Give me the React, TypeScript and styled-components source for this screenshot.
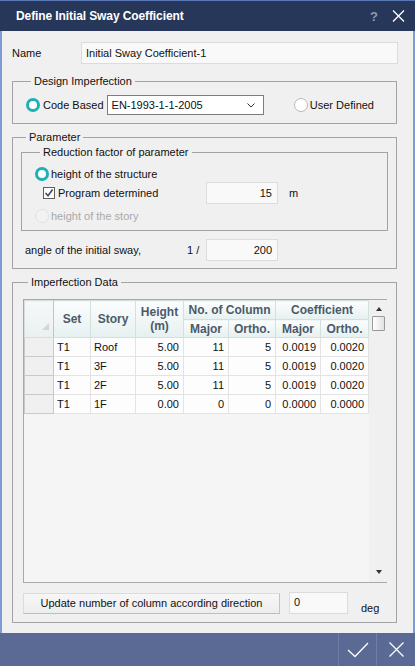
import React from 'react';
import styled, { createGlobalStyle } from 'styled-components';

const Global = createGlobalStyle`
  html, body { margin: 0; padding: 0; }
  body {
    font-family: "Liberation Sans", Arial, sans-serif;
    font-size: 11px;
    color: #111;
    background: #ffffff;
  }
  * { box-sizing: border-box; }
`;

const Window = styled.div`
  width: 415px;
  height: 666px;
  display: flex;
  flex-direction: column;
  overflow: hidden;
`;

const TitleBar = styled.div`
  height: 31px;
  flex: none;
  background: #27375a;
  border-top: 1px solid #5a78b8;
  display: flex;
  align-items: center;
  padding: 0 10px 0 16px;
  color: #fff;
`;

const Title = styled.div`
  font-weight: bold;
  font-size: 12px;
  letter-spacing: -0.1px;
  flex: 1;
`;

const TitleHelp = styled.span`
  color: #8c98b0;
  font-size: 13px;
  font-weight: bold;
  margin-right: 14px;
`;

const Body = styled.div`
  flex: 1;
  background: #f0f0f0;
  border-left: 2px solid #7f9bd6;
  border-right: 2px solid #7f9bd6;
  padding: 11px 16px 0 10px;
  display: flex;
  flex-direction: column;
`;

const Row = styled.div<{ $mt?: number; $h?: number }>`
  display: flex;
  align-items: center;
  margin-top: ${p => p.$mt ?? 0}px;
  height: ${p => p.$h ?? 14}px;
`;

const Label = styled.span<{ $w?: number; $ml?: number; $disabled?: boolean }>`
  ${p => (p.$w ? `width: ${p.$w}px; flex: none;` : '')}
  margin-left: ${p => p.$ml ?? 0}px;
  color: ${p => (p.$disabled ? '#a9a9a9' : '#111')};
  white-space: nowrap;
`;

const TextBox = styled.div<{ $w: number; $align?: string; $top?: boolean; $ml?: number }>`
  width: ${p => p.$w}px;
  height: 22px;
  flex: none;
  margin-left: ${p => p.$ml ?? 0}px;
  background: #f9f9f9;
  border: 1px solid #dcdcdc;
  display: flex;
  align-items: ${p => (p.$top ? 'flex-start' : 'center')};
  justify-content: ${p => (p.$align === 'right' ? 'flex-end' : 'flex-start')};
  padding: ${p => (p.$top ? '3px 4px' : '0 5px 0 4px')};
  color: #111;
`;

const Group = styled.fieldset<{ $mt: number; $pad: string }>`
  margin: ${p => p.$mt}px 0 0 0;
  padding: ${p => p.$pad};
  border: 1px solid #a3a3a3;
  min-inline-size: 0;
`;

const Legend = styled.legend`
  padding: 0 3px;
  margin-left: 5px;
  line-height: 14px;
  height: 14px;
  color: #111;
`;

const Radio = styled.span<{ $state: 'on' | 'off' | 'disabled' }>`
  width: 14px;
  height: 14px;
  flex: none;
  border-radius: 50%;
  background: ${p => (p.$state === 'disabled' ? '#f2f2f2' : '#ffffff')};
  border: ${p =>
    p.$state === 'on'
      ? '3px solid #1fb0b6'
      : p.$state === 'off'
      ? '1px solid #b9b9b9'
      : '1px solid #e2e2e2'};
`;

const Check = styled.span<{ $ml: number }>`
  width: 12px;
  height: 12px;
  flex: none;
  margin-left: ${p => p.$ml}px;
  border: 1px solid #5f5f5f;
  background: #fff;
  display: flex;
  align-items: center;
  justify-content: center;
`;

const Select = styled.div`
  width: 157px;
  height: 20px;
  flex: none;
  margin-left: 3px;
  border: 1px solid #7d7d7d;
  background: #fff;
  display: flex;
  align-items: center;
  justify-content: space-between;
  padding: 0 8px 0 4px;
`;

const RightGroup = styled.div`
  margin-left: auto;
  display: flex;
  align-items: center;
`;

const TableFrame = styled.div`
  height: 284px;
  border: 1px solid #a9a9a9;
  display: flex;
`;

const GridArea = styled.div`
  flex: 1;
  background: #f5f5f5;
`;

const Table = styled.table`
  border-collapse: collapse;
  table-layout: fixed;
  width: 344px;
`;

const Col = styled.col<{ $w: number }>`
  width: ${p => p.$w}px;
`;

const HeadRow = styled.tr<{ $h: number }>`
  height: ${p => p.$h}px;
`;

const HeadCell = styled.th`
  font-weight: bold;
  font-size: 12px;
  color: #4b5a6a;
  background: linear-gradient(#fbfdfd, #e6f0f0);
  border: 1px solid #d6dfdf;
  text-align: center;
  padding: 0;
  line-height: 14px;
  white-space: nowrap;
  overflow: hidden;
`;

const Corner = styled.th`
  background: linear-gradient(#f6f8f8, #eaf0f0);
  border: 1px solid #d6dfdf;
  border-right: 1px solid #c4c4c4;
  padding: 0;
  vertical-align: bottom;
  text-align: right;
`;

const CornerMark = styled.span`
  display: inline-block;
  width: 0;
  height: 0;
  margin: 0 4px 5px 0;
  border-left: 7px solid transparent;
  border-bottom: 7px solid #d2d6d6;
`;

const DataRow = styled.tr`
  height: 19px;
`;

const RowHead = styled.td`
  background: #f0f0f0;
  border: 1px solid #c9c9c9;
  padding: 0;
`;

const Cell = styled.td<{ $align?: string }>`
  background: #fdfdfd;
  border: 1px solid #e3e3e3;
  padding: ${p => (p.$align === 'right' ? '0 4px 0 0' : '0 0 0 3px')};
  text-align: ${p => p.$align ?? 'left'};
  font-size: 11px;
  color: #111;
  white-space: nowrap;
`;

const ScrollBar = styled.div`
  width: 19px;
  flex: none;
  background: #f0f0f0;
  display: flex;
  flex-direction: column;
  align-items: center;
  padding-top: 7px;
`;

const Arrow = styled.span<{ $down?: boolean }>`
  width: 0;
  height: 0;
  border-left: 3px solid transparent;
  border-right: 3px solid transparent;
  ${p => (p.$down ? 'border-top: 4px solid #333;' : 'border-bottom: 4px solid #333;')}
  ${p => (p.$down ? 'margin-top: auto; margin-bottom: 8px;' : '')}
`;

const Thumb = styled.span`
  width: 13px;
  height: 15px;
  margin-top: 5px;
  border: 1px solid #9a9a9a;
  border-radius: 1px;
  background: linear-gradient(90deg, #ffffff, #e2e2e2);
`;

const Button = styled.div`
  width: 257px;
  height: 21px;
  flex: none;
  display: flex;
  align-items: center;
  justify-content: center;
  background: linear-gradient(#f7f7f7, #ededed);
  border: 1px solid #dcdcdc;
  border-right-color: #c4c4c4;
  border-bottom-color: #bdbdbd;
  color: #111;
`;

const DegLabel = styled.span`
  margin-left: 13px;
  margin-top: 9px;
`;

const Footer = styled.div`
  height: 33px;
  flex: none;
  background: #5b6a95;
  display: flex;
  justify-content: flex-end;
`;

const FooterBtn = styled.div<{ $w: number }>`
  width: ${p => p.$w}px;
  border-left: 1px solid #6f7ea6;
  display: flex;
  align-items: center;
  justify-content: center;
`;

const rows = [
  ['T1', 'Roof', '5.00', '11', '5', '0.0019', '0.0020'],
  ['T1', '3F', '5.00', '11', '5', '0.0019', '0.0020'],
  ['T1', '2F', '5.00', '11', '5', '0.0019', '0.0020'],
  ['T1', '1F', '0.00', '0', '0', '0.0000', '0.0000'],
];

export default function App() {
  return (
    <>
      <Global />
      <Window>
        <TitleBar>
          <Title>Define Initial Sway Coefficient</Title>
          <TitleHelp>?</TitleHelp>
          <svg width="13" height="12" viewBox="0 0 13 12">
            <path d="M1 0.5 L12 11.5 M12 0.5 L1 11.5" stroke="#fff" strokeWidth="1.3" />
          </svg>
        </TitleBar>
        <Body>
          <Row $h={22}>
            <Label $w={69}>Name</Label>
            <TextBox $w={317}>Initial Sway Coefficient-1</TextBox>
          </Row>

          <Group $mt={10} $pad="7px 22px 8px 13px">
            <Legend>Design Imperfection</Legend>
            <Row $h={20}>
              <Radio $state="on" />
              <Label $ml={3}>Code Based</Label>
              <Select>
                <span>EN-1993-1-1-2005</span>
                <svg width="8" height="5" viewBox="0 0 8 5">
                  <path d="M0.5 0.5 L4 4 L7.5 0.5" stroke="#333" strokeWidth="1" fill="none" />
                </svg>
              </Select>
              <RightGroup>
                <Radio $state="off" />
                <Label $ml={2}>User Defined</Label>
              </RightGroup>
            </Row>
          </Group>

          <Group $mt={6} $pad="1px 8px 7px 8px">
            <Legend>Parameter</Legend>
            <Group $mt={0} $pad="8px 8px 7px 13px">
              <Legend>Reduction factor of parameter</Legend>
              <Row $h={14}>
                <Radio $state="on" />
                <Label $ml={2}>height of the structure</Label>
              </Row>
              <Row $h={22} $mt={1}>
                <Check $ml={8}>
                  <svg width="10" height="10" viewBox="0 0 10 10">
                    <path d="M1.5 5 L4 7.8 L8.6 1.5" stroke="#3b4a68" strokeWidth="1.6" fill="none" />
                  </svg>
                </Check>
                <Label $ml={3} $w={148}>Program determined</Label>
                <TextBox $w={72} $align="right">15</TextBox>
                <Label $ml={11}>m</Label>
              </Row>
              <Row $h={14} $mt={5}>
                <Radio $state="disabled" />
                <Label $ml={2} $disabled>height of the story</Label>
              </Row>
            </Group>
            <Row $h={22} $mt={8}>
              <Label $ml={4} $w={162}>angle of the initial sway,</Label>
              <Label $w={19}>1 /</Label>
              <TextBox $w={72} $align="right">200</TextBox>
            </Row>
          </Group>

          <Group $mt={6} $pad="10px 9px 8px 10px">
            <Legend>Imperfection Data</Legend>
            <TableFrame>
              <GridArea>
                <Table>
                  <colgroup>
                    <Col $w={29} />
                    <Col $w={37} />
                    <Col $w={45} />
                    <Col $w={48} />
                    <Col $w={45} />
                    <Col $w={47} />
                    <Col $w={45} />
                    <Col $w={48} />
                  </colgroup>
                  <thead>
                    <HeadRow $h={19}>
                      <Corner rowSpan={2}>
                        <CornerMark />
                      </Corner>
                      <HeadCell rowSpan={2}>Set</HeadCell>
                      <HeadCell rowSpan={2}>Story</HeadCell>
                      <HeadCell rowSpan={2}>
                        Height
                        <br />
                        (m)
                      </HeadCell>
                      <HeadCell colSpan={2}>No. of Column</HeadCell>
                      <HeadCell colSpan={2}>Coefficient</HeadCell>
                    </HeadRow>
                    <HeadRow $h={18}>
                      <HeadCell>Major</HeadCell>
                      <HeadCell>Ortho.</HeadCell>
                      <HeadCell>Major</HeadCell>
                      <HeadCell>Ortho.</HeadCell>
                    </HeadRow>
                  </thead>
                  <tbody>
                    {rows.map((r, i) => (
                      <DataRow key={i}>
                        <RowHead />
                        <Cell>{r[0]}</Cell>
                        <Cell>{r[1]}</Cell>
                        <Cell $align="right">{r[2]}</Cell>
                        <Cell $align="right">{r[3]}</Cell>
                        <Cell $align="right">{r[4]}</Cell>
                        <Cell $align="right">{r[5]}</Cell>
                        <Cell $align="right">{r[6]}</Cell>
                      </DataRow>
                    ))}
                  </tbody>
                </Table>
              </GridArea>
              <ScrollBar>
                <Arrow />
                <Thumb />
                <Arrow $down />
              </ScrollBar>
            </TableFrame>
            <Row $h={22} $mt={9}>
              <Button>Update number of column according direction</Button>
              <TextBox $w={59} $top $ml={9}>0</TextBox>
              <DegLabel>deg</DegLabel>
            </Row>
          </Group>
        </Body>
        <Footer>
          <FooterBtn $w={38}>
            <svg width="22" height="16" viewBox="0 0 22 16">
              <path d="M1 8 L8 14.5 L21 1" stroke="#fff" strokeWidth="1.3" fill="none" />
            </svg>
          </FooterBtn>
          <FooterBtn $w={39}>
            <svg width="15" height="15" viewBox="0 0 15 15">
              <path d="M0.5 0.5 L14.5 14.5 M14.5 0.5 L0.5 14.5" stroke="#fff" strokeWidth="1.3" />
            </svg>
          </FooterBtn>
        </Footer>
      </Window>
    </>
  );
}
